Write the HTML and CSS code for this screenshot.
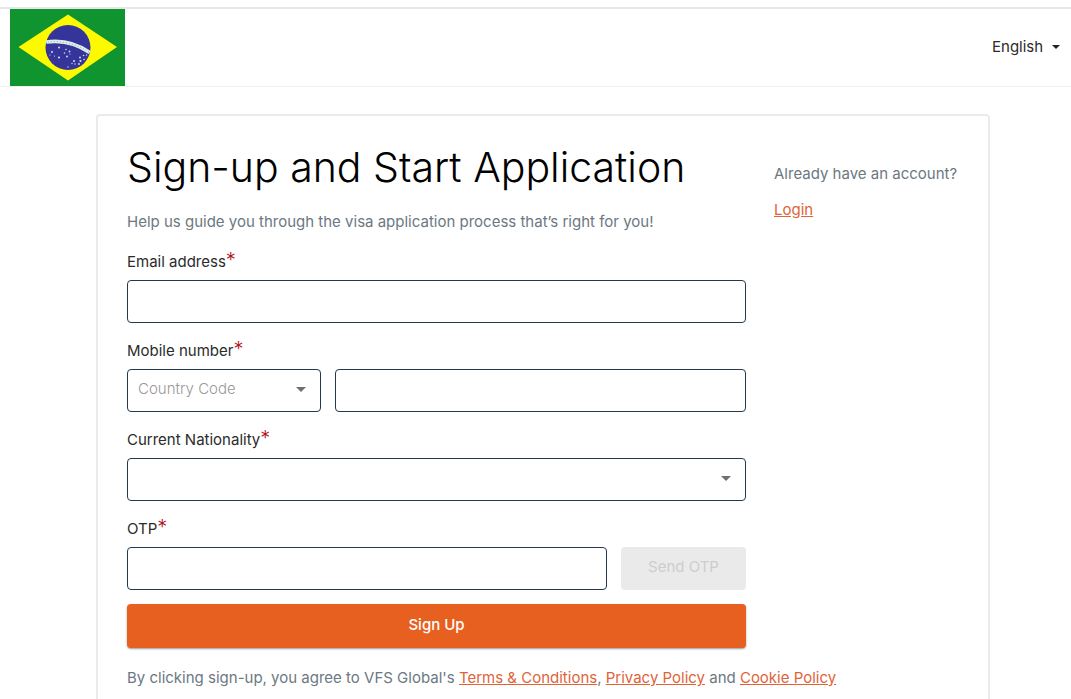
FILE: index.html
```
<!DOCTYPE html>
<html lang="en">

  <head>
    <meta charset="utf-8">
    <meta name="viewport" content="width=device-width, initial-scale=1">
    <title>Sign-up and Start Application</title>
    <link rel="stylesheet" href="styles.css">
  </head>

  <body>
    <header class="header">
      <a class="logo" href="#" aria-label="Home">
        <svg class="flag" viewBox="0 0 115 77" role="img" aria-label="Brazil">
          <rect width="115" height="77" fill="#0f942f"/>
          <path d="M8.500 38L58 5.500L107 38L58 71.500Z" fill="#fdf900"/>
          <circle cx="58" cy="38.500" r="22.500" fill="#34349a"/>
          <path d="M36.200 33C50 31 66 34 79.700 43.500" fill="none" stroke="#dfeceb" stroke-width="3.600"/>
          <path d="M38 33C50 31.500 66 34.500 79 43" fill="none" stroke="#8fb5a5" stroke-width="1" stroke-dasharray="1 2"/>
          <g fill="#d5d9f2">
            <circle cx="49" cy="38.500" r="1"/>
            <circle cx="42" cy="43" r="1"/>
            <circle cx="40" cy="46" r=".6"/>
            <circle cx="44.500" cy="47" r=".6"/>
            <circle cx="49" cy="48.500" r="1.100"/>
            <circle cx="56" cy="40.500" r=".8"/>
            <circle cx="59.500" cy="42.500" r=".9"/>
            <circle cx="54.500" cy="44" r=".8"/>
            <circle cx="57" cy="47.500" r="1"/>
            <circle cx="60" cy="45" r=".6"/>
            <circle cx="64" cy="52" r="1"/>
            <circle cx="62" cy="54.500" r=".7"/>
            <circle cx="58" cy="58" r=".7"/>
            <circle cx="65" cy="55" r=".7"/>
            <circle cx="70" cy="48.500" r="1"/>
            <circle cx="73.500" cy="46.500" r=".8"/>
            <circle cx="70.500" cy="52" r="1.100"/>
            <circle cx="69" cy="55" r=".9"/>
            <circle cx="74" cy="50.500" r=".8"/>
            <circle cx="76.500" cy="46" r=".7"/>
          </g>
        </svg>
      </a>
      <div class="language">
        <select class="language-select" aria-label="Language">
          <option>English</option>
        </select>
      </div>
    </header>

    <main class="main">
      <div class="card">
        <form class="form" id="signup">
          <h1 class="title">Sign-up and Start Application</h1>
          <p class="intro">Help us guide you through the visa application process that’s right for you!</p>

          <div class="field">
            <label class="label" for="email">Email address<span class="required">*</span></label>
            <input class="control" id="email" type="email" required>
          </div>

          <div class="field">
            <label class="label" for="mobile">Mobile number<span class="required">*</span></label>
            <div class="row">
              <div class="select code">
                <select class="control placeholder" aria-label="Country Code" required>
                  <option value="">Country Code</option>
                </select>
              </div>
              <input class="control" id="mobile" type="tel" required>
            </div>
          </div>

          <div class="field">
            <label class="label" for="nationality">Current Nationality<span class="required">*</span></label>
            <div class="select">
              <select class="control" id="nationality" required>
                <option value=""></option>
              </select>
            </div>
          </div>

          <div class="field">
            <label class="label" for="otp">OTP<span class="required">*</span></label>
            <div class="row">
              <input class="control" id="otp" type="text" required>
              <button class="button send" type="button" disabled>Send OTP</button>
            </div>
          </div>

          <button class="button signup" type="submit">Sign Up</button>
        </form>

        <aside class="account">
          <p>Already have an account?</p>
          <a class="link" href="#">Login</a>
        </aside>

        <p class="legal">By clicking sign-up, you agree to VFS Global's <a class="link" href="#">Terms &amp; Conditions</a>, <a class="link" href="#">Privacy Policy</a> and <a class="link" href="#">Cookie Policy</a></p>
      </div>
    </main>
  </body>

</html>
```

FILE: styles.css
```
* {
  box-sizing: border-box;
}
body {
  margin: 0;
  padding-top: 7px;
  background: #fff;
  color: #2b2b2b;
  font: 400 15px/20px Inter, "Liberation Sans", Arial, sans-serif;
  font-optical-sizing: none;
}
h1, p {
  margin: 0;
}
input, select, button {
  font: inherit;
  color: inherit;
}

/* header */
.header {
  display: flex;
  align-items: center;
  justify-content: space-between;
  padding: 0 11px 0 10px;
  border-top: 2px solid #e6e6e6;
  border-bottom: 1px solid #efefef;
}
.logo, .flag {
  display: block;
}
.flag {
  width: 115px;
  height: 77px;
}
.language, .select {
  position: relative;
}
.language-select {
  appearance: none;
  padding: 0 16px 2px 0;
  border: 0;
  background: none;
}
.language::after, .select::after {
  content: "";
  position: absolute;
  top: 50%;
  right: 0;
  margin-top: -3px;
  border: 4px solid transparent;
  border-top-color: #222;
  border-bottom: 0;
  pointer-events: none;
}

/* card */
.main {
  padding: 27px 81px 0 96px;
}
.card {
  display: grid;
  grid-template-columns: 1fr 186px;
  column-gap: 28px;
  padding: 26px 28px 30px 29px;
  border: 2px solid #ebebeb;
  border-radius: 4px;
}
.title {
  color: #000;
  font-size: 41px;
  font-weight: 300;
  font-optical-sizing: auto;
  line-height: 50px;
  white-space: nowrap;
}
.intro {
  margin-top: 20px;
  margin-bottom: 20px;
}
.intro, .account, .legal {
  color: #6c7882;
}
.link {
  color: #e0643a;
  text-decoration: underline;
}

/* fields */
.field {
  margin-bottom: 18px;
}
.field:has(.send) {
  margin-bottom: 14px;
}
.label {
  display: block;
  margin-bottom: 8px;
}
.required {
  color: #b3131b;
  font-size: 20px;
  font-weight: 300;
  line-height: 16px;
}
.control {
  display: block;
  width: 100%;
  height: 43px;
  padding: 0 10px;
  border: 1px solid #24394d;
  border-radius: 4px;
  background: #fff;
  appearance: none;
}
.placeholder {
  padding-bottom: 4px;
  color: #999;
  font-weight: 300;
}
.row {
  display: flex;
  gap: 14px;
}
.row .control {
  flex: 1;
}
.code {
  flex: 0 0 194px;
}
.select::after {
  right: 15px;
  margin-top: -4px;
  border-width: 5px 5px 0;
  border-top-color: #6f6f6f;
}
.button {
  border: 0;
  border-radius: 4px;
}
.send {
  flex: 0 0 125px;
  padding-bottom: 4px;
  background: #eaeaea;
  color: #cdcdcd;
}
.signup {
  display: block;
  width: 100%;
  height: 44px;
  padding-bottom: 4px;
  background: #e76020;
  color: #fff;
  font-weight: 500;
  box-shadow: 0 1px 2px rgba(0, 0, 0, .4);
}

/* side text and terms */
.account {
  padding-top: 22px;
  white-space: nowrap;
}
.account p {
  margin-bottom: 16px;
}
.legal {
  grid-column: 1 / -1;
  margin-top: 20px;
}
```
